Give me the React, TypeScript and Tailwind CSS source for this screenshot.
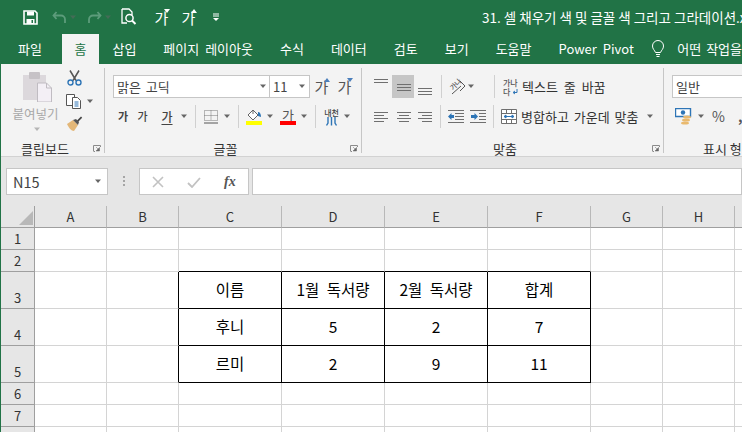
import React from 'react';

const font = { fontFamily: '"Noto Sans CJK KR", "Noto Sans", sans-serif' };

const tabs = [
  { label: '삽입' },
  { label: '페이지 레이아웃' },
  { label: '수식' },
  { label: '데이터' },
  { label: '검토' },
  { label: '보기' },
  { label: '도움말' },
  { label: 'Power Pivot' },
];

const Caret = ({ className = '', dim = false }: { className?: string; dim?: boolean }) => (
  <svg width="10" height="5" viewBox="0 0 10 5" className={`shrink-0 ${className}`}>
    <path d="M2 0.5h6L5 4z" fill={dim ? '#b5b5b5' : '#666666'} />
  </svg>
);

const Sep = ({ className = '' }: { className?: string }) => (
  <div className={`w-px h-[23px] shrink-0 bg-[#d0d0d0] ${className}`} />
);

const Expander = () => (
  <div className="w-[15px] shrink-0 flex justify-end pr-[3px] pt-[6px]">
    <svg width="8" height="7" viewBox="0 0 8 7" className="shrink-0">
      <path d="M0.5 6V0.5H7.5M7.5 0.5V2M0.5 6.5H2" stroke="#8a8a8a" fill="none" />
      <path d="M3 2l3 3M6.5 2.5v3.5H3z" stroke="#666666" fill="#666666" strokeWidth="0.5" />
    </svg>
  </div>
);

const GroupLabel = ({ text, className = '' }: { text: string; className?: string }) => (
  <div className={`flex h-[14px] mt-auto ${className}`}>
    <div className="flex-1 text-center text-[13px] leading-[19px] text-[#333333] whitespace-nowrap">{text}</div>
    <Expander />
  </div>
);

const Lines = ({ rows, className = '' }: { rows: [number, number, number][]; className?: string }) => (
  <svg width="15" height="14" viewBox="0 0 15 14" className={`shrink-0 ${className}`}>
    {rows.map(([y, a, b]) => (
      <path key={y} d={`M${a} ${y + 0.5}H${b}`} stroke="#6f6f6f" />
    ))}
  </svg>
);

const ArrowUp = ({ glyph = '가', down = false, light = false }: { glyph?: string; down?: boolean; light?: boolean }) => (
  <div className="flex items-start w-[23px] justify-center relative">
    <span className={`text-[15px] leading-[23px] ${light ? 'text-white' : 'text-[#555555]'}`}>{glyph}</span>
    <svg width="6" height="4" viewBox="0 0 6 4" className="absolute top-[3px] right-[3px]">
      <path d={down ? 'M0 0h6L3 4z' : 'M0 4h6L3 0z'} fill={light ? '#ffffff' : '#4a7ebb'} />
    </svg>
  </div>
);

function App() {
  const columns = ['A', 'B', 'C', 'D', 'E', 'F', 'G', 'H', ''];
  const rowHeights = ['1', '2', '3', '4', '5', '6', '7', ''];
  const table: Record<string, string[]> = {
    '3': ['이름', '1월 독서량', '2월 독서량', '합계'],
    '4': ['후니', '5', '2', '7'],
    '5': ['르미', '2', '9', '11'],
  };

  return (
    <div className="w-[742px] h-[432px] overflow-hidden bg-white" style={font}>
      {/* Title bar */}
      <div className="h-[34px] bg-[#217346] flex items-center pl-[23px] text-white">
        <svg width="15" height="15" viewBox="0 0 15 15" className="shrink-0">
          <path d="M1 1h11l2 2v11H1z" fill="none" stroke="#fff" strokeWidth="1.6" />
          <path d="M4 1.5h7v4H4z" fill="#fff" />
          <path d="M3.5 9h8v5h-8z" fill="#fff" />
          <path d="M8.5 10h1.5v3H8.5z" fill="#217346" />
        </svg>
        <svg width="15" height="13" viewBox="0 0 15 13" className="ml-[14px] shrink-0">
          <path d="M4.5 1L1.5 4.5l3 3.5M2 4.5h7a4 4 0 0 1 4 4V12" fill="none" stroke="#5c9c7b" strokeWidth="1.8" />
        </svg>
        <Caret className="ml-[1px] opacity-50" />
        <svg width="15" height="13" viewBox="0 0 15 13" className="ml-[9px] shrink-0">
          <path d="M10.5 1l3 3.5-3 3.5M13 4.5H6a4 4 0 0 0-4 4V12" fill="none" stroke="#5c9c7b" strokeWidth="1.8" />
        </svg>
        <Caret className="ml-[1px] opacity-50" />
        <svg width="16" height="18" viewBox="0 0 16 18" className="ml-[8px] shrink-0">
          <path d="M1 1h7l3 3v3M1 1v14h5" fill="none" stroke="#fff" strokeWidth="1.3" />
          <circle cx="8.5" cy="10" r="3.6" fill="none" stroke="#fff" strokeWidth="1.5" />
          <path d="M11 12.5l3.5 3.5" stroke="#fff" strokeWidth="2" />
        </svg>
        <div className="ml-[13px] shrink-0"><ArrowUp down light /></div>
        <div className="ml-[4px] shrink-0"><ArrowUp light /></div>
        <svg width="8" height="8" viewBox="0 0 8 8" className="ml-[12px] shrink-0">
          <path d="M1 1h6M1 3h6" stroke="#fff" />
          <path d="M1 5h6L4 8z" fill="#fff" />
        </svg>
        <div className="ml-[262px] shrink-0 text-[13.5px] whitespace-nowrap">31. 셀 채우기 색 및 글꼴 색 그리고 그라데이션.xlsx</div>
      </div>

      {/* Tabs */}
      <div className="h-[30px] bg-[#217346] flex items-stretch text-white text-[13px] whitespace-nowrap pl-[5px]">
        <div className="shrink-0 px-[13px] flex items-center">파일</div>
        <div className="ml-[7px] w-[37px] shrink-0 bg-[#f3f3f3] text-[#217346] flex items-center justify-center">
          홈
        </div>
        {tabs.map((t) => (
          <div key={t.label} className="shrink-0 px-[13.5px] flex items-center [word-spacing:3px]">{t.label}</div>
        ))}
        <div className="shrink-0 flex items-center ml-[4px]">
          <svg width="14" height="18" viewBox="0 0 14 18" className="shrink-0">
            <path d="M4.5 12.5C3.5 10 1.5 9 1.5 6a5.5 5.5 0 0 1 11 0c0 3-2 4-3 6.5z" fill="none" stroke="#fff" />
            <path d="M5 14.5h4M5.5 16.5h3" stroke="#fff" />
          </svg>
          <span className="ml-[12px] [word-spacing:2px]">어떤 작업을 원하시나요?</span>
        </div>
      </div>

      {/* Everything below the tabs */}
      <div className="border-l border-[#217346]">
        {/* Ribbon */}
        <div className="h-[93px] bg-[#f3f3f3] border-b border-[#d2d2d2] flex pt-[4px] text-[#444444]">
          {/* Clipboard */}
          <div className="w-[104px] h-[85px] shrink-0 border-r border-[#c6c6c6] flex flex-col">
            <div className="flex">
              <div className="w-[58px] ml-[7px] flex flex-col items-center pt-[4px]">
                <svg width="29" height="30" viewBox="0 0 29 30" className="shrink-0">
                  <rect x="0" y="3" width="23" height="25" fill="#dcd8dc" />
                  <rect x="6" y="0" width="11" height="7" rx="1" fill="#c6c2c6" />
                  <path d="M14.5 11h9l5 5v14h-14z" fill="#f3eff5" stroke="#c0bcc2" />
                  <path d="M23.5 11v5h5" fill="none" stroke="#c0bcc2" />
                </svg>
                <div className="text-[12.5px] leading-[16px] mt-[4px] -ml-[3px] text-[#a8a8a8] whitespace-nowrap">붙여넣기</div>
                <Caret dim className="mt-[5px]" />
              </div>
              <div className="flex flex-col pt-[2px]">
                <svg width="15" height="16" viewBox="0 0 15 16" className="ml-[1px] shrink-0">
                  <path d="M3 0.5l6 10M12 0.5l-6 10" stroke="#555555" strokeWidth="1.5" />
                  <circle cx="3.5" cy="12.5" r="2.5" fill="none" stroke="#2e75b6" strokeWidth="1.4" />
                  <circle cx="11.5" cy="12.5" r="2.5" fill="none" stroke="#2e75b6" strokeWidth="1.4" />
                </svg>
                <div className="flex items-center mt-[8px]">
                  <svg width="16" height="15" viewBox="0 0 16 15" className="shrink-0">
                    <path d="M0.5 0.5h8v11h-8z" fill="#fff" stroke="#555555" />
                    <path d="M6.5 3.5h5l3 3v8h-8z" fill="#fff" stroke="#555555" />
                    <path d="M8.5 8h4M8.5 10h4M8.5 12h4" stroke="#2e75b6" />
                  </svg>
                  <Caret className="ml-[3px]" />
                </div>
                <svg width="17" height="16" viewBox="0 0 17 16" className="mt-[7px] shrink-0">
                  <path d="M1 8l6-4 5 5-4 6c-3 0-5-3-7-7z" fill="#e3b778" />
                  <path d="M7 4l3-1 3 3-1 3z" fill="#555555" />
                  <path d="M11 4.5l4-4 1.2 1.2-4 4z" fill="#444444" />
                </svg>
              </div>
            </div>
            <GroupLabel text="클립보드" />
          </div>

          {/* Font */}
          <div className="w-[257px] h-[85px] shrink-0 border-r border-[#c6c6c6] flex flex-col pl-[8px] pt-[7px]">
            <div className="flex h-[23px]">
              <div className="w-[157px] bg-white border border-[#c6c6c6] flex items-center pl-[3px] pr-[1px] text-[13px] text-[#444444] justify-between">
                <span className="[word-spacing:2px]">맑은 고딕</span>
                <Caret />
              </div>
              <div className="w-[40px] bg-white border border-l-0 border-[#c6c6c6] flex items-center pl-[3px] pr-[2px] text-[13px] justify-between">
                <span>11</span>
                <Caret />
              </div>
              <ArrowUp />
              <ArrowUp down />
            </div>
            <div className="flex items-center h-[23px] mt-[7px]">
              <span className="w-[20px] text-center text-[11px] font-bold">가</span>
              <span className="w-[19px] text-center text-[11px] font-medium">가</span>
              <span className="w-[24px] ml-[3px] text-center text-[12px] font-medium underline underline-offset-2">가</span>
              <Caret />
              <Sep className="ml-[6px]" />
              <svg width="14" height="14" viewBox="0 0 14 14" className="ml-[8px] shrink-0">
                <path d="M0.5 0.5h13v10h-13zM7 0.5v10M0.5 5.5h13" fill="none" stroke="#777777" strokeDasharray="1 1" />
                <path d="M0 13h14" stroke="#555555" />
              </svg>
              <Caret className="ml-[4px]" />
              <Sep className="ml-[6px]" />
              <div className="ml-[7px] w-[16px] shrink-0 flex flex-col items-center">
                <svg width="16" height="12" viewBox="0 0 16 12" className="shrink-0">
                  <path d="M2 6l5-5 5 5-5 5z" fill="#fff" stroke="#666666" />
                  <path d="M7 1V5" stroke="#666666" />
                  <path d="M12 3c2 0 3 2 3 5l-3-1z" fill="#2e75b6" />
                </svg>
                <div className="w-[16px] h-[4px] bg-[#ffff00]" />
              </div>
              <Caret className="ml-[3px]" />
              <div className="ml-[5px] w-[16px] shrink-0 flex flex-col items-center">
                <span className="text-[13px] leading-[13px] text-[#555555]">가</span>
                <div className="w-[16px] h-[4px] bg-[#ff0000]" />
              </div>
              <Caret className="ml-[3px]" />
              <Sep className="ml-[6px]" />
              <div className="ml-[8px] w-[15px] shrink-0 flex flex-col items-center">
                <span className="text-[8px] leading-[9px] font-medium whitespace-nowrap">내천</span>
                <svg width="11" height="9" viewBox="0 0 11 9" className="shrink-0">
                  <path d="M2 0v6L0.5 8.5M5.5 0v8.5M9 0v6l1.5 2.5" fill="none" stroke="#2e75b6" strokeWidth="1.4" />
                </svg>
              </div>
              <Caret className="ml-[3px]" />
            </div>
            <GroupLabel text="글꼴" className="-ml-[8px]" />
          </div>

          {/* Alignment */}
          <div className="w-[302px] h-[85px] shrink-0 border-r border-[#c6c6c6] flex flex-col pl-[12px] pt-[7px]">
            <div className="flex items-center h-[23px]">
              <Lines rows={[[2, 0, 14], [5, 0, 14]]} className="-mt-[6px]" />
              <div className="ml-[3px] w-[22px] h-[23px] shrink-0 bg-[#c6c6c6] flex items-center justify-center">
                <Lines rows={[[4, 1, 15], [7, 1, 15], [10, 1, 15]]} />
              </div>
              <Lines rows={[[6, 0, 14], [9, 0, 14], [12, 0, 14]]} className="ml-[4px] mt-[4px]" />
              <Sep className="ml-[8px]" />
              <div className="relative ml-[6px] w-[18px] h-[16px] shrink-0">
                <span className="absolute left-[1px] top-[1px] text-[7px] leading-[8px] font-medium text-[#555555] -rotate-45 whitespace-nowrap">가나</span>
                <svg width="18" height="16" viewBox="0 0 18 16" className="absolute left-0 top-0">
                  <path d="M4 15l9-8M12 2l5 5-5 5" fill="none" stroke="#555555" />
                </svg>
              </div>
              <Caret className="ml-[0px]" />
              <Sep className="ml-[18px]" />
              <div className="relative ml-[8px] w-[16px] shrink-0 text-[8px] leading-[9px] font-medium text-[#555555] whitespace-nowrap">
                가나<br />다
                <svg width="6" height="6" viewBox="0 0 6 6" className="absolute left-[9px] bottom-[1px]">
                  <path d="M5 0v3.5H1.5M3 2L1 3.5 3 5" fill="none" stroke="#2e75b6" />
                </svg>
              </div>
              <span className="ml-[3px] text-[13px] whitespace-nowrap text-[#333333] [word-spacing:3px]">텍스트 줄 바꿈</span>
            </div>
            <div className="flex items-center h-[23px] mt-[7px]">
              <Lines rows={[[2, 0, 14], [5, 0, 10], [8, 0, 14], [11, 0, 10]]} />
              <Lines rows={[[2, 0, 14], [5, 2, 12], [8, 0, 14], [11, 2, 12]]} className="ml-[8px]" />
              <Lines rows={[[2, 0, 14], [5, 4, 14], [8, 0, 14], [11, 4, 14]]} className="ml-[6px]" />
              <Sep className="ml-[7px]" />
              <svg width="17" height="14" viewBox="0 0 17 14" className="ml-[7px] shrink-0">
                <path d="M0 0.5h16M7 3.5h9M7 6.5h9M7 9.5h9M0 12.5h16" stroke="#6f6f6f" />
                <path d="M0 6.5L3.5 3v2H6v3H3.5v2z" fill="#2e75b6" />
              </svg>
              <svg width="17" height="14" viewBox="0 0 17 14" className="ml-[5px] shrink-0">
                <path d="M0 0.5h16M9 3.5h7M9 6.5h7M9 9.5h7M0 12.5h16" stroke="#6f6f6f" />
                <path d="M8 6.5L4.5 3v2H1v3h3.5v2z" fill="#2e75b6" />
              </svg>
              <Sep className="ml-[6px]" />
              <svg width="16" height="15" viewBox="0 0 16 15" className="ml-[7px] shrink-0">
                <path d="M0.5 0.5h15v14h-15zM0.5 4.5h15M0.5 10.5h15M5.5 0.5v4M10.5 0.5v4M5.5 10.5v4M10.5 10.5v4" fill="#fff" stroke="#6f6f6f" />
                <path d="M3 7.5h10M3 7.5l2-1.5v3zM13 7.5l-2-1.5v3z" stroke="#2e75b6" fill="#2e75b6" />
              </svg>
              <span className="ml-[4px] text-[13px] whitespace-nowrap text-[#333333] [word-spacing:2px]">병합하고 가운데 맞춤</span>
              <Caret className="ml-[7px]" />
            </div>
            <GroupLabel text="맞춤" className="-ml-[12px]" />
          </div>

          {/* Number */}
          <div className="flex-1 min-w-0 h-[85px] flex flex-col pl-[8px] pt-[7px]">
            <div className="h-[23px] w-[120px] shrink-0 bg-white border border-[#c6c6c6] flex items-center pl-[3px] text-[13px]">일반</div>
            <div className="flex items-center h-[23px] mt-[7px]">
              <svg width="17" height="17" viewBox="0 0 17 17" className="ml-[3px] shrink-0">
                <path d="M0.5 0.5h15v8h-15z" fill="#fff" stroke="#2e75b6" strokeWidth="1.4" />
                <circle cx="8" cy="4.5" r="2.2" fill="#2e75b6" />
                <ellipse cx="12" cy="9" rx="4" ry="1.6" fill="#e9b96e" />
                <ellipse cx="11" cy="12" rx="4" ry="1.6" fill="#e9b96e" />
                <ellipse cx="10" cy="15" rx="4" ry="1.6" fill="#e9b96e" />
              </svg>
              <Caret className="ml-[4px]" />
              <span className="ml-[6px] text-[14px] text-[#555555]">%</span>
              <span className="ml-[13px] text-[14px] font-bold text-[#555555]">,</span>
            </div>
            <div className="flex h-[14px] mt-auto pl-[31px] text-[13px] leading-[19px] text-[#333333] whitespace-nowrap">표시 형식</div>
          </div>
        </div>

        {/* Formula bar */}
        <div className="h-[49px] bg-[#e6e6e6] flex items-start pt-[11px] pl-[5px]">
          <div className="w-[102px] h-[27px] bg-white border border-[#c6c6c6] flex items-center justify-between pl-[6px] pr-[4px] text-[14.5px] text-[#444444]">
            <span>N15</span>
            <Caret />
          </div>
          <svg width="4" height="12" viewBox="0 0 4 12" className="ml-[14px] mt-[8px] shrink-0">
            <path d="M1 1h2M1 5h2M1 9h2" stroke="#a5a5a5" strokeWidth="2" />
          </svg>
          <div className="ml-[13px] w-[110px] h-[27px] bg-white border border-[#c6c6c6] flex items-center pl-[12px]">
            <svg width="12" height="12" viewBox="0 0 12 12" className="shrink-0">
              <path d="M1 1l10 10M11 1L1 11" stroke="#c2c2c2" strokeWidth="1.6" />
            </svg>
            <svg width="14" height="12" viewBox="0 0 14 12" className="ml-[23px] shrink-0">
              <path d="M1 7l4 4 8-9" fill="none" stroke="#c2c2c2" strokeWidth="1.8" />
            </svg>
            <span className="ml-[23px] text-[14px] italic font-bold text-[#555555]" style={{ fontFamily: '"Liberation Serif", serif' }}>fx</span>
          </div>
          <div className="ml-[3px] flex-1 h-[27px] bg-white border border-[#c6c6c6]" />
        </div>

        {/* Sheet */}
        <div className="grid grid-cols-[34px_72px_72px_103px_103px_103px_103px_72px_72px_8px] grid-rows-[22px_22px_22px_37px_37px_37px_22px_22px_6px] text-[#222222]">
          <div className="bg-[#e6e6e6] border-r border-b border-[#9f9f9f] flex items-end justify-end pr-[1px] pb-[2px]">
            <svg width="14" height="14" viewBox="0 0 14 14" className="shrink-0"><path d="M14 0v14H0z" fill="#b8b8b8" /></svg>
          </div>
          {columns.map((c, i) => (
            <div key={i} className="bg-[#e6e6e6] border-r border-b border-r-[#b8b8b8] border-b-[#9f9f9f] flex items-center justify-center text-[13px] text-[#333333]">
              {c}
            </div>
          ))}
          {rowHeights.map((r) => (
            <React.Fragment key={r || 'last'}>
              <div className="bg-[#e6e6e6] border-r border-b border-[#9f9f9f] flex items-end justify-center text-[13px] leading-[20px] text-[#333333]">
                {r}
              </div>
              {columns.map((c, i) => {
                const inTable = table[r] && i >= 2 && i <= 5;
                const leftOfTable = table[r] && i === 1;
                const aboveTable = r === '2' && i >= 2 && i <= 5;
                return (
                  <div
                    key={i}
                    className={`flex items-center justify-center text-[15.5px] text-black [word-spacing:4px] border-r border-b ${
                      inTable || leftOfTable ? 'border-r-black' : 'border-r-[#d4d4d4]'
                    } ${inTable || aboveTable ? 'border-b-black' : 'border-b-[#d4d4d4]'}`}
                  >
                    {inTable ? table[r][i - 2] : ''}
                  </div>
                );
              })}
            </React.Fragment>
          ))}
        </div>
      </div>
    </div>
  );
}

export default App;
